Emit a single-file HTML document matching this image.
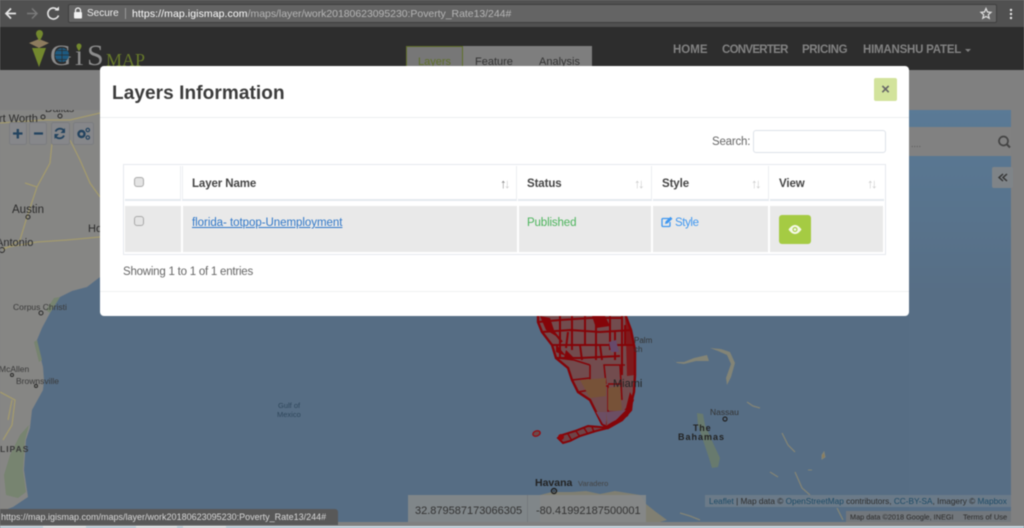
<!DOCTYPE html>
<html><head><meta charset="utf-8"><style>
html,body{margin:0;padding:0;width:1024px;height:528px;overflow:hidden;background:#808080;font-family:"Liberation Sans",sans-serif}
.a{position:absolute;white-space:nowrap}
#wrap{position:relative;width:1024px;height:528px;overflow:hidden;filter:blur(.4px)}
.h{font-weight:bold;font-size:11.5px;color:#444;letter-spacing:-.1px}
.c{box-sizing:border-box;position:absolute;background:#fff}
.r{box-sizing:border-box;position:absolute;background:#e9e9e9}
.cb{position:absolute;width:8px;height:8px;background:#e4e4e4;border:1px solid #a9a9a9;border-radius:3px}
.sort{position:absolute;font-size:13px;color:#ccc;letter-spacing:-2.5px}
.n{font-size:11.5px;font-weight:bold;color:#828282}
</style></head><body><div id="wrap">

<!-- map -->
<svg class="a" style="left:0;top:0" width="1024" height="528" viewBox="0 0 1024 528">
<defs><linearGradient id="g" x1="0" y1="0" x2="0" y2="1"><stop offset="0" stop-color="#5a7a96"/><stop offset=".45" stop-color="#576e85"/><stop offset="1" stop-color="#576e85"/></linearGradient></defs>
<rect width="1024" height="528" fill="#808080"/>
<rect x="0" y="110" width="1011" height="412" fill="#566d84"/>
<rect x="909" y="110" width="102" height="412" fill="url(#g)"/>
<path d="M0 110H110V270L100 277 87 287 72 291 60 297 50 313 42 328 37 340 40 355 43 367 44 380 43 390 32 410 30 428 26 440 24 470 28 497 13 507 0 512Z" fill="#868684"/>
<path d="M29 425 25 440 23 470 26 492 18 498 6 495 4 475 10 455 20 435Z" fill="#778470"/>
<path d="M60 297 50 313 46 310 54 298ZM37 340 42 360 39 362 34 342Z" fill="#778470"/>
<path d="M52 143 50 163 37 187 25 183M37 187 27 217 20 240 3 250M3 248 37 242 67 240 100 237M70 140 80 160 90 183 100 197M0 123 43 120 70 120 100 113M0 392 15 400 12 425 3 440M12 400 8 420" fill="none" stroke="#a39a6e" stroke-width="1.300"/>
<!-- search bar / right panel strips -->
<rect x="909" y="127" width="102" height="29" fill="#818181"/>
<circle cx="1003.500" cy="141" r="4.500" fill="none" stroke="#444" stroke-width="1.700"/><path d="M1007 144.500 1010 147.500" stroke="#444" stroke-width="2"/>
<text x="911" y="147" font-size="9" fill="#555">....</text>
<rect x="992" y="167" width="21" height="21" fill="#7f8488" rx="2"/>
<path d="M1003 174 999 177.500 1003 181M1007 174 1003 177.500 1007 181" fill="none" stroke="#333" stroke-width="1.400"/>
<!-- florida -->
<path d="M538 314H625L631 330 635 350 635 375 634 392 632 400 631 410 622 420 608 428 602 424 596 412 590 400 578 392 572 380 568 368 556 358 552 345 542 332 538 322Z" fill="#724c4e" stroke="#840509" stroke-width="2.400"/>
<path d="M578 392 590 390 604 386H608V410M606 384 604 365H625M558 358 574 360 590 365M590 365V380M608 385V412H626M604 412 606 425M572 380 590 378M620 365 622 400M608 384H622" fill="none" stroke="#840509" stroke-width="1.500"/>
<path d="M538 322 560 320 590 318 622 318M542 332 570 330 600 332 632 330M552 345 575 345 596 345 634 345M556 358 580 358 620 356M560 314V358M572 314V350M585 316V345M596 320V360M610 316V350M622 316V375M568 332 566 348M580 345 582 360M600 345 602 360M548 325 562 342M625 325V345M615 332V360" fill="none" stroke="#840509" stroke-width="2"/>
<path d="M540 316 550 318 556 336 546 330ZM556 344 566 356 556 352ZM566 350 574 358 564 358ZM592 316 605 316 610 326 596 328Z" fill="#840509"/>
<path d="M609 342 616 340 619 352 611 352Z" fill="#66496a"/>
<path d="M608 388 620 386 622 412 608 410ZM580 380 606 378 606 396 590 398Z" fill="#775238"/>
<path d="M630 392 634 400 628 416 616 424 608 428 606 426 618 418 626 408Z" fill="#840509"/>
<path d="M596 412 606 412 606 425 603 424ZM606 412 626 410 616 420 608 424Z" fill="#6c4e64"/>
<path d="M625 314 632 332 636 352 635 375 627 376 626 340Z" fill="#840509" opacity=".7"/>
<path d="M608 428 596 431 580 436 570 441 563 443 558 438 562 435 575 431 588 426 600 427Z" fill="#6d4448" stroke="#840509" stroke-width="2"/>
<path d="M568 434 572 441M576 431 580 437M584 428 588 434M592 427 594 432" stroke="#840509" stroke-width="1.500"/>
<circle cx="561" cy="437" r="3" fill="#930609"/>
<ellipse cx="536.500" cy="433.500" rx="3.800" ry="2.600" fill="#6a4a4a" stroke="#950a10" stroke-width="1.300" transform="rotate(-20 536.500 433.500)"/>
<!-- islands -->
<path d="M670 357 676 362 684 362 694 358 707 355 709 361 696 361 684 364 677 363Z" fill="#838476"/>
<path d="M710 348 721 349 730 352 735 363 731 377 727 385 726 378 731 364 727 355 718 351Z" fill="#838476"/>
<path d="M747 402 753 406 760 408M782 433 788 445 795 452M770 472 778 477M795 472 802 488 810 495M680 513 690 516 700 520M837 508 843 520" fill="none" stroke="#838476" stroke-width="1.300"/>
<path d="M822 455 824 452 825 457 822 459ZM808 470H812" stroke="#838476" fill="#8e7c58"/>
<path d="M697 413 703 414 705 425 713 443 720 458 718 467 712 468 709 458 703 440 698 425Z" fill="#687a6e"/>
<path d="M540 495 552 492 572 492 586 491 600 494 615 491 640 495 646 504 656 512 667 520 660 522H540Z" fill="#807f72"/>
<circle cx="554" cy="491" r="2.500" fill="none" stroke="#222" stroke-width="1.500"/><circle cx="554" cy="491" r=".8" fill="#222"/>
<circle cx="725" cy="419" r="2" fill="none" stroke="#222" stroke-width="1.200"/>
<circle cx="28" cy="217" r="2" fill="none" stroke="#2a2a2a" stroke-width="1"/>
<circle cx="2" cy="250" r="2.500" fill="none" stroke="#2a2a2a" stroke-width="1"/>
<circle cx="41" cy="313" r="2" fill="none" stroke="#2a2a2a" stroke-width="1"/>
<circle cx="43" cy="117" r="2" fill="none" stroke="#2a2a2a" stroke-width="1"/>
<circle cx="60" cy="116" r="2" fill="none" stroke="#2a2a2a" stroke-width="1"/>
<circle cx="12" cy="375" r="1.500" fill="none" stroke="#2a2a2a" stroke-width="1"/>
<circle cx="36" cy="386" r="1.500" fill="none" stroke="#2a2a2a" stroke-width="1"/>
<text x="-1" y="122" font-size="11" fill="#2b2b2b">rt Worth</text>
<text x="45" y="112" font-size="10.500" fill="#2b2b2b">Dallas</text>
<text x="12" y="213" font-size="11.500" fill="#2b2b2b">Austin</text>
<text x="-4" y="246" font-size="11" fill="#2b2b2b">Antonio</text>
<text x="88" y="232" font-size="11" fill="#2b2b2b">Ho</text>
<text x="13" y="310" font-size="8.500" fill="#3a3a3a">Corpus Christi</text>
<text x="-1" y="372" font-size="8.500" fill="#3a3a3a">McAllen</text>
<text x="16" y="384" font-size="8.500" fill="#3a3a3a">Brownsville</text>
<text x="0" y="452" font-size="8.500" font-weight="bold" letter-spacing="1" fill="#3a3a3a">LIPAS</text>
<text x="278" y="408" font-size="7.500" fill="#2f475c">Gulf of</text>
<text x="277" y="417" font-size="7.500" fill="#2f475c">Mexico</text>
<text x="634" y="343" font-size="8" fill="#333">Palm</text>
<text x="634" y="352" font-size="8" fill="#333">ch</text>
<text x="613" y="387" font-size="11" fill="#222">Miami</text>
<text x="710" y="415" font-size="8.500" fill="#333">Nassau</text>
<text x="693" y="431" font-size="9" font-weight="bold" letter-spacing=".8" fill="#222">The</text>
<text x="678" y="440" font-size="9" font-weight="bold" letter-spacing="1" fill="#222">Bahamas</text>
<text x="535" y="486" font-size="10.500" font-weight="bold" fill="#222">Havana</text>
<text x="578" y="486" font-size="7.500" fill="#444">Varadero</text>
<!-- lat/long -->
<rect x="408" y="495" width="238" height="27" fill="#85888a" opacity=".9"/>
<rect x="527" y="495" width="1" height="27" fill="#74797d"/>
<text x="415" y="514" font-size="11" fill="#333">32.879587173066305</text>
<text x="536" y="514" font-size="11" fill="#333">-80.41992187500001</text>
<!-- attribution -->
<rect x="705" y="495" width="306" height="12" fill="#6b7a88"/>
<text x="709" y="504" font-size="8.250" fill="#2d2d2d"><tspan fill="#1d4a66">Leaflet</tspan> | Map data © <tspan fill="#1d4a66">OpenStreetMap</tspan> contributors, <tspan fill="#1d4a66">CC-BY-SA</tspan>, Imagery © <tspan fill="#1d4a66">Mapbox</tspan></text>
<rect x="846" y="511" width="165" height="11" fill="#72777c"/>
<text x="850" y="519.500" font-size="7.300" fill="#2a2a2a">Map data ©2018 Google, INEGI</text>
<text x="963" y="519.500" font-size="7.500" fill="#2a2a2a">Terms of Use</text>
<!-- map edges -->
<rect x="0" y="70" width="1024" height="40" fill="#808080"/>
<rect x="0" y="522" width="1024" height="4" fill="#808080"/>
<rect x="0" y="526" width="1024" height="2" fill="#cbdde8"/>
<rect x="43" y="526" width="43" height="2" fill="#eef2f4"/><rect x="136" y="526" width="41" height="2" fill="#eef2f4"/><rect x="183" y="526" width="43" height="2" fill="#eef2f4"/>
<rect x="1011" y="110" width="13" height="57" fill="#808080"/><rect x="1013" y="167" width="11" height="355" fill="#808080"/><rect x="1011" y="188" width="2" height="334" fill="#808080"/>
<!-- map toolbar -->
<g fill="#86878a" stroke="#7a7c7f">
<rect x="9.500" y="122.500" width="17" height="22" rx="2"/>
<rect x="29.500" y="122.500" width="17" height="22" rx="2"/>
<rect x="51.500" y="122.500" width="18" height="22" rx="2"/>
<rect x="73.500" y="122.500" width="20" height="22" rx="2"/>
</g>
<path d="M13 133.500H22.500M17.800 129V138.500M34 133.500H43" stroke="#23435f" stroke-width="2.300" fill="none"/>
<path d="M64.500 131.500A5 5 0 0 0 55.500 131.500M55 135.500A5 5 0 0 0 64 135.500" stroke="#23435f" stroke-width="1.800" fill="none"/>
<path d="M65 128V133H60.500ZM54.500 139V134H59Z" fill="#23435f"/>
<circle cx="81.500" cy="134" r="3" fill="none" stroke="#23435f" stroke-width="2.400"/>
<circle cx="87.800" cy="130" r="1.700" fill="none" stroke="#23435f" stroke-width="1.200"/>
<circle cx="87.800" cy="137.500" r="1.700" fill="none" stroke="#23435f" stroke-width="1.200"/>
</svg>

<!-- browser chrome -->
<div class="a" style="left:0;top:0;width:1024px;height:27px;background:#505050"></div>
<div class="a" style="left:68px;top:4px;width:929px;height:19px;background:#646464;border:1px solid #3f3f3f;box-sizing:border-box;border-radius:2px"></div>
<svg class="a" style="left:0;top:0" width="1024" height="27" viewBox="0 0 1024 27">
<path d="M16 13.500H6M11 8.500 6 13.500 11 18.500" fill="none" stroke="#e6e6e6" stroke-width="1.700"/>
<path d="M37 13.500H27M32 8.500 37 13.500 32 18.500" fill="none" stroke="#7a7a7a" stroke-width="1.500"/>
<path d="M58 10.500A5.500 5.500 0 1 0 58.500 15.500" fill="none" stroke="#e6e6e6" stroke-width="1.600"/>
<path d="M54.500 10.500H59V6.500Z" fill="#e6e6e6"/>
<rect x="74" y="12" width="8" height="6.500" rx="1" fill="#f2f2f2"/>
<path d="M75.500 12V10.500A2.500 2.500 0 0 1 80.500 10.500V12" fill="none" stroke="#f2f2f2" stroke-width="1.200"/>
<rect x="125" y="8" width="1" height="11" fill="#999"/>
<path d="M986 8.500 987.500 12 991 12.300 988.300 14.700 989.200 18.300 986 16.400 982.800 18.300 983.700 14.700 981 12.300 984.500 12Z" fill="none" stroke="#e0e0e0" stroke-width="1.200"/>
<circle cx="1011" cy="10" r="1.200" fill="#e6e6e6"/><circle cx="1011" cy="14" r="1.200" fill="#e6e6e6"/><circle cx="1011" cy="18" r="1.200" fill="#e6e6e6"/>
</svg>
<div class="a" style="left:87px;top:8px;font-size:10px;color:#eee">Secure</div>
<div class="a" style="left:132px;top:8px;font-size:10.500px;color:#b5b5b5"><span style="color:#fff;letter-spacing:.08px">https://map.igismap.com</span><span style="letter-spacing:-.04px">/maps/layer/work20180623095230:Poverty_Rate13/244#</span></div>

<!-- navbar -->
<div class="a" style="left:0;top:27px;width:1024px;height:43px;background:#2d2d2d"></div>
<svg class="a" style="left:25px;top:27px" width="130" height="43" viewBox="25 27 130 43">
<path d="M29 43 39 39 49 43 39 48Z" fill="#8d7c5e"/>
<path d="M32 48H46L39 67Z" fill="#73882e"/>
<path d="M39.500 30a3.500 3.500 0 0 1 3.500 3.500C43 36 39.500 41 39.500 41S36 36 36 33.500A3.500 3.500 0 0 1 39.500 30Z" fill="#73882e"/>
<text x="50" y="65" font-family="Liberation Serif" font-size="30" fill="#8c8c8c">G</text>
<circle cx="62" cy="55" r="7" fill="#1d5a80"/>
<path d="M55 55H69M62 48V62M57 50.500H67M57 59.500H67" stroke="#2d2d2d" stroke-width=".7"/>
<text x="75" y="65" font-family="Liberation Serif" font-size="30" fill="#8c8c8c">i</text>
<rect x="76" y="44" width="6" height="7" fill="#2d2d2d"/>
<path d="M79 43.500a2.500 2.500 0 0 1 2.500 2.500C81.500 48 79 51 79 51S76.500 48 76.500 46A2.500 2.500 0 0 1 79 43.500Z" fill="#73882e"/>
<text x="87" y="65" font-family="Liberation Serif" font-size="30" fill="#8c8c8c">S</text>
<text x="106" y="66" font-family="Liberation Serif" font-size="18" fill="#66782a">MAP</text>
</svg>
<div class="a" style="left:406px;top:46px;width:186px;height:24px;background:#7e7e7e"></div>
<div class="a" style="left:406px;top:46px;width:57px;height:24px;box-sizing:border-box;border:1px solid #5f6f2a;border-bottom:none;background:#777"></div>
<div class="a" style="left:418px;top:56px;font-size:11px;color:#5f6f2a">Layers</div>
<div class="a" style="left:475px;top:56px;font-size:11px;color:#333">Feature</div>
<div class="a" style="left:539px;top:56px;font-size:11px;color:#333">Analysis</div>
<div class="a n" style="left:673px;top:44px">HOME</div>
<div class="a n" style="left:722px;top:44px;letter-spacing:-.72px">CONVERTER</div>
<div class="a n" style="left:802px;top:44px;letter-spacing:-.4px">PRICING</div>
<div class="a n" style="left:863px;top:44px;letter-spacing:-.22px">HIMANSHU PATEL</div>
<div class="a" style="left:965px;top:49px;border:3.500px solid transparent;border-top-color:#828282;border-bottom:none"></div>

<!-- modal -->
<div class="a" style="left:100px;top:66px;width:809px;height:250px;background:#fff;border-radius:4px"></div>
<div class="a" style="left:100px;top:117px;width:809px;height:1px;background:#eceef0"></div>
<div class="a" style="left:100px;top:291px;width:809px;height:1px;background:#f0f1f2"></div>
<div class="a" style="left:112px;top:83px;font-size:19px;font-weight:bold;color:#3b3b3b;letter-spacing:.09px">Layers Information</div>
<div class="a" style="left:874px;top:78px;width:23px;height:23px;background:#d2e39c;border-radius:2px;text-align:center;font-size:15px;line-height:23px;color:#666;font-weight:bold">×</div>
<div class="a" style="left:712px;top:136px;font-size:11.500px;color:#666;letter-spacing:-.2px">Search:</div>
<div class="a" style="left:753px;top:130px;width:133px;height:23px;box-sizing:border-box;border:1px solid #dde2e8;border-radius:3px;background:#fff"></div>

<!-- table -->
<div class="a" style="left:123px;top:164px;width:763px;height:91px;box-sizing:border-box;border:1px solid #e6e9ee;background:#fff"></div>
<div class="c" style="left:125px;top:166px;width:56px;height:35px;border-bottom:2px solid #e4e9ef;border-right:1px solid #eceef2"></div>
<div class="c" style="left:182px;top:166px;width:335px;height:35px;border-bottom:2px solid #e4e9ef;border-right:1px solid #eceef2;border-left:1px solid #eceef2"></div>
<div class="c" style="left:518px;top:166px;width:134px;height:35px;border-bottom:2px solid #e4e9ef;border-right:1px solid #eceef2"></div>
<div class="c" style="left:653px;top:166px;width:116px;height:35px;border-bottom:2px solid #e4e9ef;border-right:1px solid #eceef2"></div>
<div class="c" style="left:770px;top:166px;width:114px;height:35px;border-bottom:2px solid #e4e9ef"></div>
<div class="r" style="left:125px;top:206px;width:56px;height:46px"></div>
<div class="r" style="left:183px;top:206px;width:334px;height:46px"></div>
<div class="r" style="left:519px;top:206px;width:132px;height:46px"></div>
<div class="r" style="left:653px;top:206px;width:115px;height:46px"></div>
<div class="r" style="left:770px;top:206px;width:113px;height:46px"></div>
<div class="cb" style="left:134px;top:177px"></div>
<div class="cb" style="left:134px;top:216px"></div>
<div class="a h" style="left:192px;top:178px">Layer Name</div>
<div class="a h" style="left:527px;top:178px">Status</div>
<div class="a h" style="left:662px;top:178px">Style</div>
<div class="a h" style="left:779px;top:178px">View</div>
<div class="sort" style="left:500px;top:176px"><span style="color:#888">↑</span>↓</div>
<div class="sort" style="left:634px;top:176px">↑↓</div>
<div class="sort" style="left:751px;top:176px">↑↓</div>
<div class="sort" style="left:867px;top:176px">↑↓</div>
<div class="a" style="left:192px;top:217px;font-size:11.500px;color:#2f77c8;text-decoration:underline;letter-spacing:-.04px">florida- totpop-Unemployment</div>
<div class="a" style="left:527px;top:217px;font-size:11.500px;color:#4cb45c;letter-spacing:-.13px">Published</div>
<svg class="a" style="left:661px;top:216px" width="12" height="12" viewBox="0 0 12 12"><path d="M8 2.500H2A1 1 0 0 0 1 3.500V9.500A1 1 0 0 0 2 10.500H8A1 1 0 0 0 9 9.500V6" fill="none" stroke="#3f97f0" stroke-width="1.300"/><path d="M4 8 4.500 5.500 9.500 .800 11.500 2.800 6.500 7.500Z" fill="#3f97f0"/></svg>
<div class="a" style="left:675px;top:217px;font-size:11.500px;color:#3f97f0;letter-spacing:-.4px">Style</div>
<div class="a" style="left:779px;top:215px;width:32px;height:29px;background:#a5cb43;border-radius:3px"></div>
<svg class="a" style="left:788px;top:224px" width="14" height="11" viewBox="0 0 14 11"><path d="M.5 5.500C3 2 5 1 7 1s4 1 6.500 4.500C11 9 9 10 7 10S3 9 .5 5.500Z" fill="#f4f8e6"/><circle cx="7" cy="5.500" r="2.500" fill="#a5cb43"/><circle cx="7" cy="5.500" r="1.400" fill="#f4f8e6"/></svg>
<div class="a" style="left:123px;top:266px;font-size:11.500px;color:#666;letter-spacing:-.23px">Showing 1 to 1 of 1 entries</div>

<!-- status link -->
<div class="a" style="left:0;top:509px;width:338px;height:16px;background:#585858;border-radius:0 3px 0 0"></div>
<div class="a" style="left:1px;top:512px;font-size:9px;color:#d8d8d8">https://map.igismap.com/maps/layer/work20180623095230:Poverty_Rate13/244#</div>
</div></body></html>
